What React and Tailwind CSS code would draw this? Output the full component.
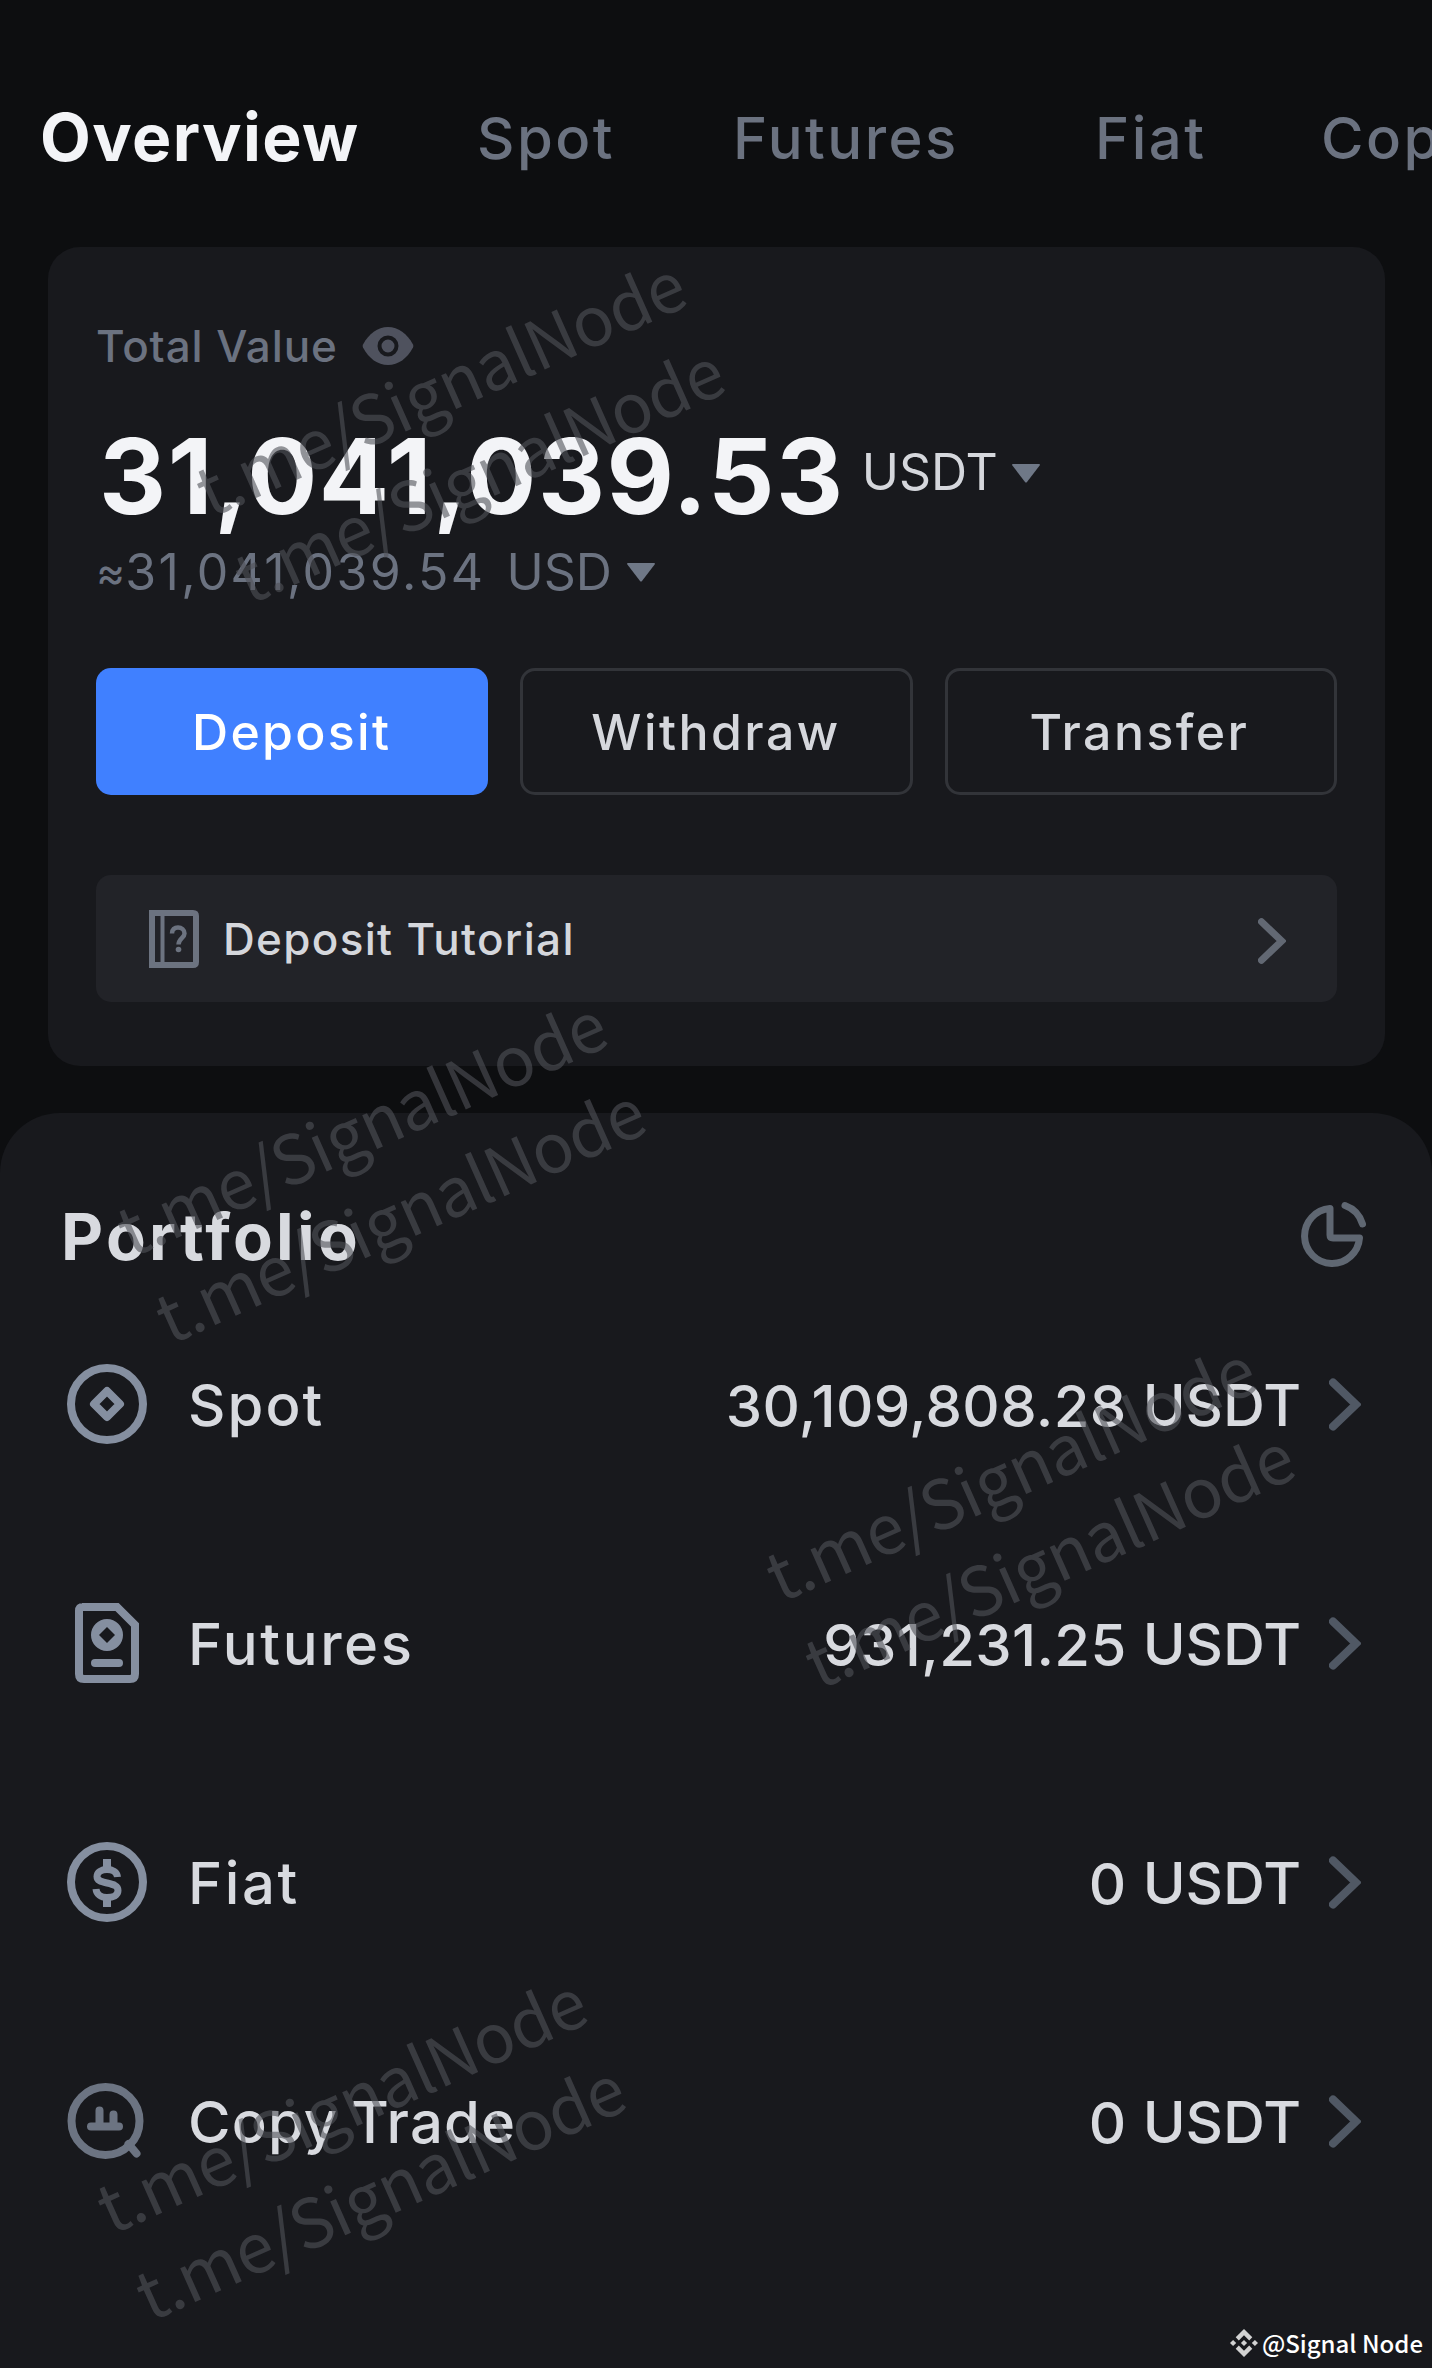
import React from 'react';

const tabs = ['Spot', 'Futures', 'Fiat', 'Copy Trade'];

// Position of each repeated channel mark on the screen
const watermarks = [
  { left: 179, top: 448 },
  { left: 100, top: 1188 },
  { left: 749, top: 1533 },
  { left: 80, top: 2165 },
];

const EyeIcon = () => (
  <svg className="h-[40px] w-[52px]" viewBox="0 0 52 40" fill="none">
    <path
      d="M1 18.5C7 7.5 15.500 1 26 1s19 6.500 25 17.500q.8 1.500 0 3C45 32.500 36.500 39 26 39S7 32.500 1 21.500q-.8-1.500 0-3Z"
      fill="#4f525e"
    />
    <circle cx="26" cy="20" r="8.500" fill="#4f525e" stroke="#18191d" strokeWidth="4" />
  </svg>
);

const CaretIcon = ({ className }) => (
  <svg className={className} viewBox="0 0 28 19">
    <path d="M0 1Q0 0 1 0H27Q28 0 28 1L15 18Q14 19 13 18Z" fill="#6f7887" />
  </svg>
);

const TutorialIcon = () => (
  <svg className="h-[60px] w-[52px]" viewBox="0 0 52 60" fill="none">
    <path d="M4 4H45Q48 4 48 7V53Q48 56 45 56H4Z" stroke="#6c7380" strokeWidth="6" />
    <path d="M14.500 4V56" stroke="#6c7380" strokeWidth="4" />
    <path
      d="M24 24.500C24 20.500 26.500 18.500 30 18.500S36.500 20.800 36.500 24.500C36.500 29 30.500 29.500 30.500 35.500"
      stroke="#6c7380"
      strokeWidth="4.500"
    />
    <circle cx="30.500" cy="40.500" r="2.800" fill="#6c7380" />
  </svg>
);

const ChevronIcon = ({ className }) => (
  <svg className={className} viewBox="0 0 32 52" fill="none">
    <path
      d="M4 4L27 26L4 48"
      stroke="currentColor"
      strokeWidth="8"
      strokeLinecap="round"
      strokeLinejoin="miter"
    />
  </svg>
);

const PieIcon = () => (
  <svg className="h-[66px] w-[66px]" viewBox="0 0 66 66" fill="none">
    <path
      d="M29 7.500A27.500 27.500 0 1 0 58.500 37H32Q29 37 29 34Z"
      stroke="#5f6772"
      strokeWidth="7"
      strokeLinejoin="round"
    />
    <path d="M44 4.500A28 28 0 0 1 61.500 23" stroke="#5f6772" strokeWidth="7" strokeLinecap="round" />
  </svg>
);

const SpotIcon = () => (
  <svg className="h-[80px] w-[80px]" viewBox="0 0 80 80" fill="none">
    <circle cx="40" cy="40" r="36" stroke="#858fa0" strokeWidth="8" />
    <path d="M40 27L53 40L40 53L27 40Z" stroke="#858fa0" strokeWidth="8" strokeLinejoin="round" />
  </svg>
);

const FuturesIcon = () => (
  <svg className="h-[80px] w-[80px]" viewBox="0 0 80 80" fill="none">
    <path
      d="M15 4H50L68 22V71Q68 76 63 76H17Q12 76 12 71V8Q12 4 16 4Z"
      stroke="#858fa0"
      strokeWidth="8"
    />
    <path
      fillRule="evenodd"
      d="M40 16A16 16 0 1 1 40 48A16 16 0 1 1 40 16ZM40 24L32 32L40 40L48 32Z"
      fill="#858fa0"
    />
    <path d="M28 60H52" stroke="#858fa0" strokeWidth="8" strokeLinecap="round" />
  </svg>
);

const FiatIcon = () => (
  <svg className="h-[80px] w-[80px]" viewBox="0 0 80 80" fill="none">
    <circle cx="40" cy="40" r="36" stroke="#858fa0" strokeWidth="8" />
    <path
      d="M50.500 35C50 30 45.500 27.500 40 27.500S30 30 30 34.500C30 38.500 33.500 39.500 40 41S51 43.500 51 48.500S46 55.500 40 55.500S29.500 52.500 29 47"
      stroke="#858fa0"
      strokeWidth="7"
    />
    <path d="M40 17V26M40 56V65" stroke="#858fa0" strokeWidth="8" />
  </svg>
);

const CopyTradeIcon = () => (
  <svg className="h-[80px] w-[80px]" viewBox="0 0 80 80" fill="none">
    <circle cx="38.500" cy="40" r="34" stroke="#6c7482" strokeWidth="8" />
    <path d="M61.500 63L69.500 72.500" stroke="#6c7482" strokeWidth="8" strokeLinecap="round" />
    <path d="M24 45.500H52M32.500 43V29.500M46.500 43V33.500" stroke="#6c7482" strokeWidth="8" strokeLinecap="round" />
  </svg>
);

const BinanceIcon = () => (
  <svg className="h-[28px] w-[28px]" viewBox="0 0 28 28" fill="#d2d2d2">
    <path d="M14 0L22.300 8.300L19.200 11.400L14 6.200L8.800 11.400L5.700 8.300Z" />
    <path d="M14 28L22.300 19.700L19.200 16.600L14 21.800L8.800 16.600L5.700 19.700Z" />
    <path d="M3.100 10.900L6.200 14L3.100 17.100L0 14Z" />
    <path d="M24.900 10.900L28 14L24.900 17.100L21.800 14Z" />
    <path d="M14 10.900L17.100 14L14 17.100L10.900 14Z" />
  </svg>
);

const assets = [
  { name: 'Spot', amount: '30,109,808.28', icon: SpotIcon, spacing: 'tracking-[0.035em]' },
  { name: 'Futures', amount: '931,231.25', icon: FuturesIcon, spacing: 'tracking-[0.045em]' },
  { name: 'Fiat', amount: '0', icon: FiatIcon, spacing: 'tracking-[0.045em]' },
  { name: 'Copy Trade', amount: '0', icon: CopyTradeIcon, spacing: 'tracking-[0.02em] [word-spacing:-0.07em]' },
];

const TabBar = () => (
  <nav className="grid h-[247px] grid-cols-[437px_256px_362px_226px_auto] items-start pt-[104px] pl-[40px] leading-none whitespace-nowrap">
    <span className="text-[66px] font-bold tracking-[0.021em] text-[#f3f4f7]">Overview</span>
    {tabs.map((tab) => (
      <span key={tab} className="mt-[5px] text-[58px] font-medium tracking-[0.043em] text-[#6b7280]">
        {tab}
      </span>
    ))}
  </nav>
);

const BalanceCard = () => (
  <section className="ml-[48px] h-[819px] w-[1337px] rounded-[32px] bg-[#18191d] px-[48px] pt-[77px] leading-none">
    <div className="flex h-[44px] items-center gap-[24px]">
      <span className="text-[44px] font-medium tracking-[0.02em] text-[#6b7280]">Total Value</span>
      <EyeIcon />
    </div>

    <div className="mt-[56px] flex h-[104px] items-start">
      <span className="pl-[3px] text-[104px] font-bold tracking-[0.0145em] text-[#f3f4f7]">31,041,039.53</span>
      <span className="mt-[23px] ml-[17px] text-[50px] text-[#d5d7dc]">USDT</span>
      <CaretIcon className="mt-[40px] ml-[14px] h-[19px] w-[28px]" />
    </div>

    <div className="mt-[19px] flex h-[50px] items-center text-[50px] text-[#6b7280]">
      <span className="text-[44px]">≈</span>
      <span className="tracking-[0.048em]">31,041,039.54</span>
      <span className="ml-[21px]">USD</span>
      <CaretIcon className="ml-[15px] h-[19px] w-[28px]" />
    </div>

    <div className="mt-[71px] grid h-[127px] grid-cols-3 gap-[32px] text-[50px] font-medium">
      <button className="rounded-[15px] bg-[#4080ff] pt-px pr-px tracking-[0.046em] text-white">Deposit</button>
      <button className="rounded-[15px] border-[3px] border-[#323439] pr-px tracking-[0.049em] text-[#d5d7dc]">
        Withdraw
      </button>
      <button className="rounded-[15px] border-[3px] border-[#323439] pr-[3px] tracking-[0.048em] text-[#d5d7dc]">
        Transfer
      </button>
    </div>

    <div className="mt-[80px] flex h-[127px] items-center rounded-[15px] bg-[#222328] pr-[51px] pl-[52px]">
      <TutorialIcon />
      <span className="ml-[23px] grow text-[44px] font-medium tracking-[0.03em] text-[#d5d7dc]">
        Deposit Tutorial
      </span>
      <ChevronIcon className="mt-[4px] h-[46px] w-[28px] text-[#626873]" />
    </div>
  </section>
);

const AssetRow = ({ name, amount, icon: Icon, spacing }) => (
  <li className="flex h-[239px] items-center pr-[71px] pl-[67px] text-[58px] leading-none font-medium text-[#d8dadf]">
    <Icon />
    <span className="mt-[3px] ml-[41px] grow">
      <span className={spacing}>{name}</span>
    </span>
    <span className="mt-[5px] tracking-[0.006em]">{amount}</span>
    <span className="mt-[3px] ml-[16px]">USDT</span>
    <ChevronIcon className="mt-px ml-[28px] h-[53px] w-[32px] text-[#505864]" />
  </li>
);

const Portfolio = () => (
  <section className="mt-[47px] h-[1255px] rounded-t-[60px] bg-[#18191d]">
    <div className="flex h-[171px] items-start justify-between pt-[88px] pr-[65px] pl-[61px]">
      <h2 className="mt-[3px] text-[65px] leading-none font-bold tracking-[0.051em] text-[#d8dadf]">Portfolio</h2>
      <PieIcon />
    </div>
    <ul>
      {assets.map((asset) => (
        <AssetRow key={asset.name} {...asset} />
      ))}
    </ul>
  </section>
);

const App = () => {
  return (
    <main className="relative h-[2368px] w-[1432px] overflow-hidden bg-[#0d0e10] font-['Inter',sans-serif]">
      <TabBar />
      <BalanceCard />
      <Portfolio />

      {watermarks.map((mark) => (
        <div
          key={mark.top}
          style={mark}
          className="pointer-events-none absolute origin-top-left -rotate-24 font-['Noto_Sans_CJK_SC',sans-serif] text-[68px] leading-[95px] tracking-[-0.013em] whitespace-nowrap text-[#505159]/60"
        >
          <p>t.me/SignalNode</p>
          <p>t.me/SignalNode</p>
        </div>
      ))}

      <div className="absolute right-[9px] bottom-[7px] flex items-center gap-[4px] font-['Noto_Sans_CJK_SC',sans-serif] text-[24px] leading-[36px] font-medium text-white">
        <BinanceIcon />
        <span>@Signal Node</span>
      </div>
    </main>
  );
};

export default App;
